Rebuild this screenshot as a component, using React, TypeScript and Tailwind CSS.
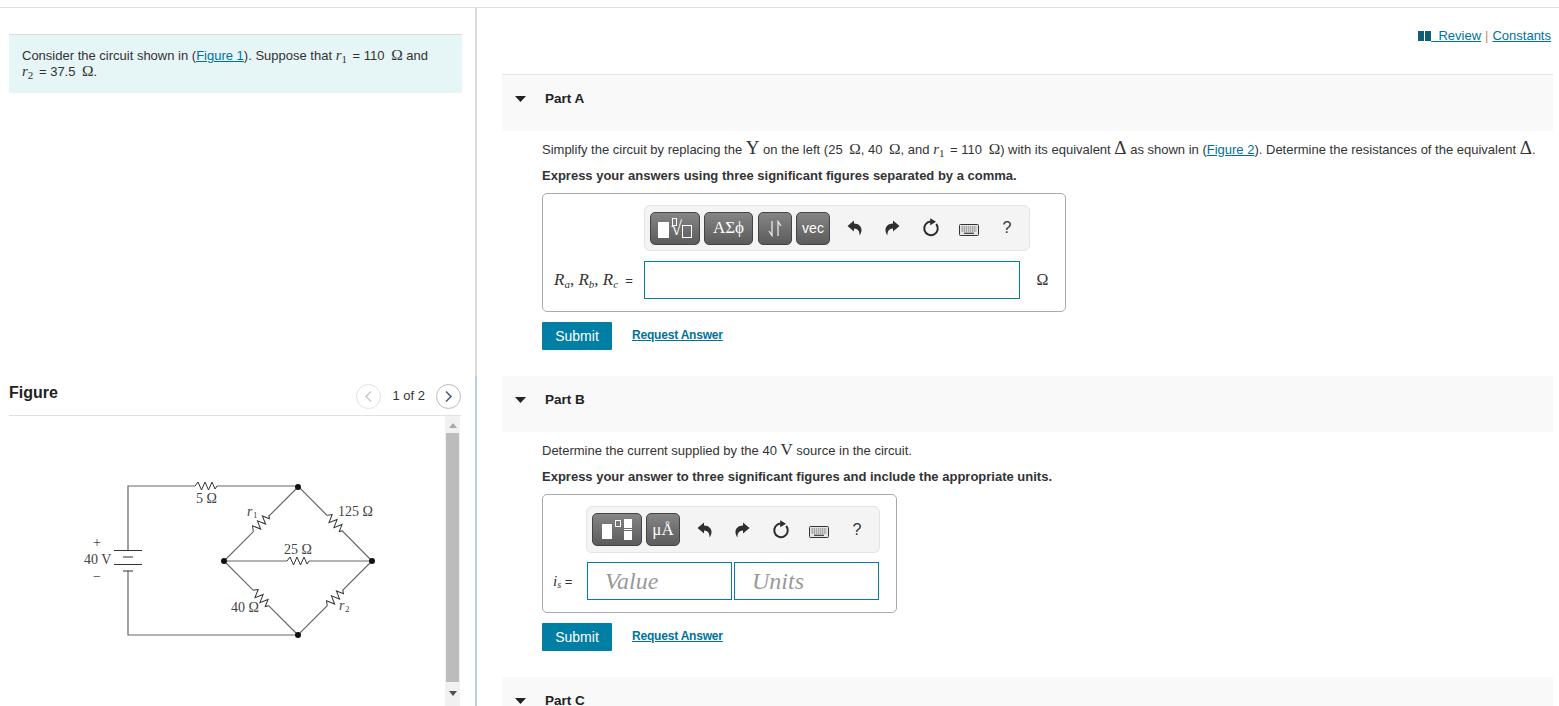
import type { ReactNode } from "react";

const sans = "font-['Liberation_Sans',Arial,sans-serif]";
const serif = "font-['Liberation_Serif','Times_New_Roman',serif]";

/* ── Small math helpers ── */
function Ohm() {
  return <span className={`${serif} text-[15.5px] ml-[3px] leading-none`}>Ω</span>;
}

function MathVar({ name, sub }: { name: string; sub?: string }) {
  return (
    <span className={`${serif} text-[15px] leading-none`}>
      <i>{name}</i>
      {sub && <sub className="text-[11px] bottom-[-3px] leading-none mr-[2px]">{sub}</sub>}
    </span>
  );
}

function Big({ children }: { children: ReactNode }) {
  return <span className={`${serif} text-[19px] leading-none`}>{children}</span>;
}

function TextLink({ children }: { children: ReactNode }) {
  return <a className="text-[#00729b] underline">{children}</a>;
}

/* ── Toolbar icons ── */
function UndoIcon({ flip }: { flip?: boolean }) {
  return (
    <svg width="15" height="16" viewBox="0 0 15 16" className={flip ? "-scale-x-100" : ""}>
      <path d="M0.5 6 L7 0.5 V3.6 C11.5 3.6 14.5 6.5 14.5 10 C14.5 12 13.8 13.8 12.5 15.5 C12.8 11.5 11 8.6 7 8.6 V11.5 Z" fill="#2f2f2f" />
    </svg>
  );
}

function ResetIcon() {
  return (
    <svg width="20" height="20" viewBox="0 0 20 20" fill="none">
      <path d="M9.5 3.6 A6.8 6.8 0 1 0 15.2 6" stroke="#2b2b2b" strokeWidth="2" />
      <path d="M9.2 0.2 L15 3.8 L9.2 7.2 Z" fill="#2b2b2b" />
    </svg>
  );
}

function KeyboardIcon() {
  return (
    <svg width="20" height="12" viewBox="0 0 20 12">
      <rect x="0.5" y="0.5" width="19" height="11" rx="1" fill="#e6e6e6" stroke="#333" />
      <path d="M2.5 3 H17.5 M2.5 5 H17.5" stroke="#666" strokeWidth="1.2" strokeDasharray="1.4 .7" />
      <path d="M2.5 7 H17.5" stroke="#666" strokeWidth="1.2" strokeDasharray="1.4 .7" />
      <path d="M5 9.3 H15" stroke="#444" strokeWidth="1.3" />
    </svg>
  );
}

function SortIcon() {
  return (
    <svg width="14" height="17" viewBox="0 0 14 17" fill="none" stroke="#e8e8e8" strokeWidth="1.3">
      <path d="M4 1 V15 M1 11 L4 15.5 L4 11" />
      <path d="M10 16 V2 M13 6 L10 1.5 L10 6" />
    </svg>
  );
}

function ToolButton({ w, children }: { w: string; children: ReactNode }) {
  return (
    <div className={`${w} h-[33px] flex items-center justify-center rounded-[5px] border border-[#444] bg-gradient-to-b from-[#858585] to-[#5c5c5c] text-white`}>
      {children}
    </div>
  );
}

function ToolActions() {
  return (
    <div className="flex items-center gap-[18.25px]">
      <div className="w-[20px] flex justify-center"><UndoIcon /></div>
      <div className="w-[20px] flex justify-center"><UndoIcon flip /></div>
      <div className="w-[20px] flex justify-center"><ResetIcon /></div>
      <div className="w-[20px] flex justify-center mt-[4px]"><KeyboardIcon /></div>
      <div className="w-[20px] flex justify-center text-[16px] text-[#333]">?</div>
    </div>
  );
}

function SubmitRow() {
  return (
    <div className="flex items-center mt-[10px]">
      <div className="w-[70px] h-[28px] flex items-center justify-center bg-[#007ea3] rounded-[1px] text-white text-[14px]">Submit</div>
      <a className="ml-[20px] -mt-[2px] text-[12px] tracking-[-0.2px] font-bold text-[#00729b] underline">Request Answer</a>
    </div>
  );
}

function PartHeader({ label, h, border }: { label: string; h: string; border?: boolean }) {
  return (
    <div className={`${h} w-[1051px] bg-[#f9f9f9] flex items-start pt-[16px] pl-[13px] ${border ? "border-t border-[#e2e2e2]" : ""}`}>
      <svg width="11" height="6" viewBox="0 0 11 6" className="mt-[5px]">
        <path d="M0 0 H11 L5.5 6 Z" fill="#222" />
      </svg>
      <span className="ml-[19px] text-[13.5px] font-bold text-[#222] leading-[16px]">{label}</span>
    </div>
  );
}

/* ── Circuit figure ── */
function Resistor({ x, y, angle }: { x: number; y: number; angle: number }) {
  return (
    <g transform={`translate(${x} ${y}) rotate(${angle})`}>
      <path d="M-11 0 H11" stroke="#fff" strokeWidth="3" />
      <path d="M-11 0 L-8 -4 L-4.5 4 L-1 -4 L2.5 4 L6 -4 L9 3 L11 0" fill="none" stroke="#333" strokeWidth="1" />
    </g>
  );
}

function Circuit() {
  const label = { fontFamily: "'Liberation Serif', serif", fontSize: 14, fill: "#444" };
  return (
    <svg width="436" height="180" viewBox="9 472 436 180" className="block">
      <g stroke="#666" strokeWidth="1.2" fill="none">
        <path d="M128 550 V486 H298 L372 561 L298 635 H128 V571" />
        <path d="M298 487 L224 561 L298 635" />
        <path d="M224 561 H372" />
      </g>
      <g stroke="#333" strokeWidth="1.2">
        <path d="M114 550.5 H142 M123 557 H133 M114 564.5 H142 M123 571 H133" />
      </g>
      <Resistor x={206} y={486} angle={0} />
      <Resistor x={261} y={523} angle={-45} />
      <Resistor x={335} y={523} angle={45} />
      <Resistor x={298} y={561} angle={0} />
      <Resistor x={261} y={598} angle={45} />
      <Resistor x={335} y={598} angle={-45} />
      <g fill="#111">
        <circle cx="298" cy="487" r="3" />
        <circle cx="224" cy="561" r="3" />
        <circle cx="372" cy="561" r="3" />
        <circle cx="298" cy="635" r="3" />
      </g>
      <text x="196" y="503" {...label}>5 Ω</text>
      <text x="338" y="516" {...label}>125 Ω</text>
      <text x="284" y="554" {...label}>25 Ω</text>
      <text x="231" y="612" {...label}>40 Ω</text>
      <text x="84" y="564" {...label}>40 V</text>
      <text x="93" y="547" {...label}>+</text>
      <text x="93" y="581" {...label}>−</text>
      <text x="247" y="516" {...label} fontStyle="italic">r</text>
      <text x="253" y="518" {...label} fontSize={9}>1</text>
      <text x="339" y="610" {...label} fontStyle="italic">r</text>
      <text x="345" y="612" {...label} fontSize={9}>2</text>
    </svg>
  );
}

function FigureScrollbar() {
  return (
    <div className="w-[15px] h-[290px] bg-[#f1f1f1] flex flex-col items-center">
      <svg width="8" height="5" viewBox="0 0 8 5" className="mt-[7px] mb-[5px]"><path d="M0 5 H8 L4 0 Z" fill="#a8a8a8" /></svg>
      <div className="w-[13px] h-[249px] bg-[#bcbcbc]" />
      <svg width="8" height="5" viewBox="0 0 8 5" className="mt-[9px]"><path d="M0 0 H8 L4 5 Z" fill="#505050" /></svg>
    </div>
  );
}

export default function App() {
  return (
    <div className={`${sans} h-[706px] overflow-hidden bg-white text-[13px] text-[#333]`}>
      <div className="h-[7px]" />
      <div className="h-[699px] border-t border-[#dfdfdf] flex">

        {/* ── Left: statement and figure ── */}
        <div className="w-[477px] shrink-0 flex flex-col">
          <div className="h-[368px] border-r-2 border-[#dcdcdc] pl-[9px] pr-[13px] pt-[26px]">
            <div className="w-[453px] h-[59px] bg-[#e6f5f6] border-t border-[#dcdcdc] pl-[13px] pt-[12px] leading-[16px]">
              <div>
                Consider the circuit shown in (<TextLink>Figure 1</TextLink>). Suppose that <MathVar name="r" sub="1" /> = 110 <Ohm /> and
              </div>
              <div className="-mt-[1px]">
                <MathVar name="r" sub="2" /> = 37.5 <Ohm />.
              </div>
            </div>
          </div>

          <div className="flex-1 border-r-2 border-[#b9cde0] pl-[9px] pr-[13px]">
            <div className="w-[452px] h-[40px] border-b border-[#e0e0e0] flex items-center justify-between pt-[1px]">
              <span className="text-[16px] font-bold text-[#222] -mt-[6px]">Figure</span>
              <div className="flex items-center">
                <div className="w-[25px] h-[25px] rounded-full border border-[#e2e2e2] flex items-center justify-center">
                  <svg width="9" height="13" viewBox="0 0 9 13" fill="none"><path d="M7 1.5 L2 6.5 L7 11.5" stroke="#c5ced4" strokeWidth="1.6" /></svg>
                </div>
                <span className="mx-[11px]">1 of 2</span>
                <div className="w-[25px] h-[25px] rounded-full border border-[#bbb] flex items-center justify-center">
                  <svg width="9" height="13" viewBox="0 0 9 13" fill="none"><path d="M2 1.5 L7 6.5 L2 11.5" stroke="#47607a" strokeWidth="1.6" /></svg>
                </div>
              </div>
            </div>
            <div className="flex items-start w-[452px]">
              <div className="w-[436px] pt-[56px]"><Circuit /></div>
              <FigureScrollbar />
            </div>
          </div>
        </div>

        {/* ── Right: the parts ── */}
        <div className="flex-1 pl-[25px]">
          <div className="h-[66px] pr-[8px] pt-[19px] flex justify-end items-start leading-[17px]">
            <svg width="13" height="10" viewBox="0 0 13 10" className="mt-[4px]">
              <rect x="0" y="0" width="6" height="10" fill="#0f5f78" />
              <rect x="7" y="0" width="6" height="10" fill="#0f5f78" />
            </svg>
            <TextLink>&nbsp;&nbsp;Review</TextLink>
            <span className="mx-[4px] text-[#c9924a]">|</span>
            <TextLink>Constants</TextLink>
          </div>

          <PartHeader label="Part A" h="h-[57px]" border />
          <div className="pl-[40px] pt-[7px] h-[245px]">
            <div className="leading-[20px] whitespace-nowrap">
              Simplify the circuit by replacing the <Big>Y</Big> on the left (25 <Ohm />, 40 <Ohm />, and <MathVar name="r" sub="1" /> = 110 <Ohm />) with its equivalent <Big>Δ</Big> as shown in (<TextLink>Figure 2</TextLink>). Determine the resistances of the equivalent <Big>Δ</Big>.
            </div>
            <div className="mt-[6px] font-bold leading-[20px]">Express your answers using three significant figures separated by a comma.</div>
            <div className="mt-[7px] w-[524px] h-[119px] border border-[#aaa] rounded-[5px] pt-[11px]">
              <div className="ml-[101px] w-[386px] h-[46px] bg-[#f4f4f4] border border-[#e3e3e3] rounded-[6px] flex items-center pl-[5px]">
                <ToolButton w="w-[50px]">
                  <div className="flex items-end gap-[3px]">
                    <div className="w-[11px] h-[16px] bg-white" />
                    <div className={`${serif} text-[20px] leading-none flex items-end`}>
                      <div className="w-[5px] h-[8px] border border-white mb-[12px]" />
                      <span className="-ml-[6px]">√</span>
                      <div className="w-[10px] h-[13px] border border-white" />
                    </div>
                  </div>
                </ToolButton>
                <div className="w-[4px]" />
                <ToolButton w="w-[49px]"><span className={`${serif} text-[17px]`}>ΑΣϕ</span></ToolButton>
                <div className="w-[5px]" />
                <ToolButton w="w-[34px]"><SortIcon /></ToolButton>
                <div className="w-[4px]" />
                <ToolButton w="w-[34px]"><span className="text-[14px]">vec</span></ToolButton>
                <div className="ml-[14px]"><ToolActions /></div>
              </div>
              <div className="flex items-center mt-[10px] h-[38px]">
                <div className={`w-[101px] pl-[11px] ${serif} text-[17px] whitespace-nowrap`}>
                  <i>R</i><sub className="text-[11px]"><i>a</i></sub>, <i>R</i><sub className="text-[11px]"><i>b</i></sub>, <i>R</i><sub className="text-[11px]"><i>c</i></sub> <span className={`${sans} text-[13px] ml-[3px]`}>=</span>
                </div>
                <div className="w-[376px] h-[38px] border border-[#007ea3]" />
                <div className={`flex-1 text-center ${serif} text-[16px]`}>Ω</div>
              </div>
            </div>
            <SubmitRow />
          </div>

          <PartHeader label="Part B" h="h-[56px]" />
          <div className="pl-[40px] pt-[8px] h-[245px]">
            <div className="leading-[20px]">
              Determine the current supplied by the 40 <span className={`${serif} text-[17px]`}>V</span> source in the circuit.
            </div>
            <div className="mt-[6px] font-bold leading-[20px]">Express your answer to three significant figures and include the appropriate units.</div>
            <div className="mt-[7px] w-[355px] h-[119px] border border-[#aaa] rounded-[5px] pt-[11px]">
              <div className="ml-[43px] w-[294px] h-[47px] bg-[#f4f4f4] border border-[#e3e3e3] rounded-[6px] flex items-center pl-[5px]">
                <ToolButton w="w-[50px]">
                  <div className="flex items-end gap-[3px]">
                    <div className="w-[10px] h-[15px] bg-white mb-[1px]" />
                    <div className="w-[6px] h-[7px] border border-white mb-[13px]" />
                    <div className="flex flex-col gap-[1px]">
                      <div className="w-[8px] h-[9px] bg-white" />
                      <div className="w-[8px] h-[1px] bg-white" />
                      <div className="w-[8px] h-[9px] bg-white" />
                    </div>
                  </div>
                </ToolButton>
                <div className="w-[4px]" />
                <ToolButton w="w-[34px]"><span className={`${serif} text-[17px]`}>μÅ</span></ToolButton>
                <div className="ml-[14px]"><ToolActions /></div>
              </div>
              <div className="flex items-center mt-[9px] h-[38px]">
                <div className={`w-[44px] pl-[10px] ${serif} text-[15px] whitespace-nowrap`}>
                  <i>i</i><sub className="text-[10px]"><i>s</i></sub> <span className={`${sans} text-[13px]`}>=</span>
                </div>
                <div className={`w-[145px] h-[38px] border border-[#007ea3] ${serif} italic text-[24px] text-[#999] pl-[17px] leading-[36px]`}>Value</div>
                <div className={`w-[145px] h-[38px] ml-[2px] border border-[#007ea3] ${serif} italic text-[24px] text-[#999] pl-[17px] leading-[36px]`}>Units</div>
              </div>
            </div>
            <SubmitRow />
          </div>

          <PartHeader label="Part C" h="h-[56px]" />
        </div>
      </div>
    </div>
  );
}
